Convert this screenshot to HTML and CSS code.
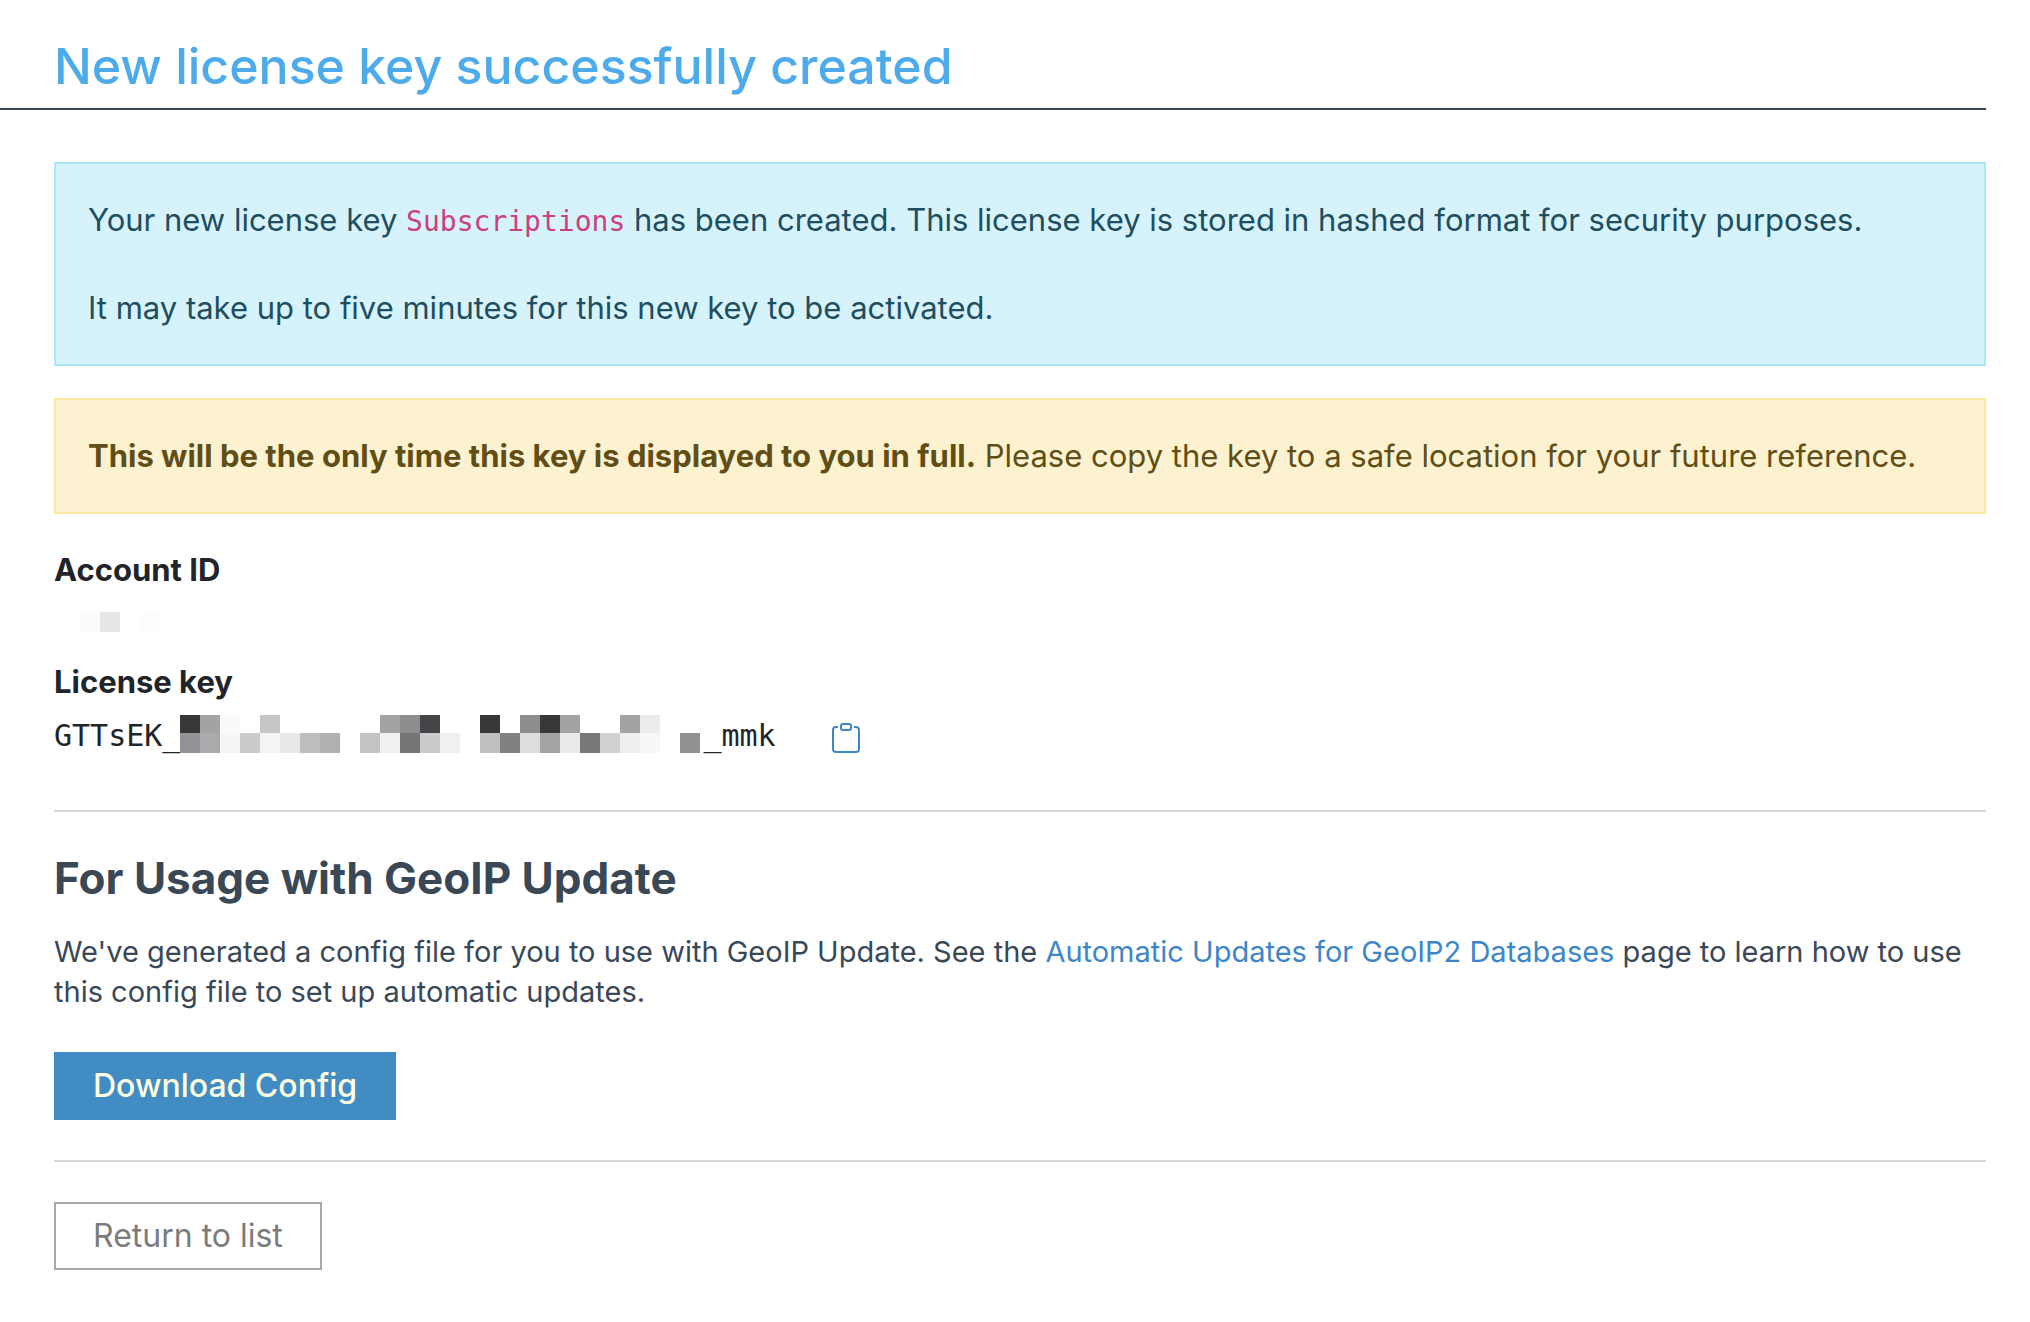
FILE: index.html
```
<!DOCTYPE html>
<html lang="en">
<head>
    <meta charset="UTF-8">
    <meta name="viewport" content="width=device-width, initial-scale=1.0">
    <title>New license key</title>
    <link rel="stylesheet" href="styles.css">
</head>
<body>

    <header class="page-header">
        <h1>New license key successfully created</h1>
    </header>

    <main class="content">
        <div class="alert alert-info">
            <p>Your new license key <code>Subscriptions</code> has been created. This license key is stored in hashed format for security purposes.</p>
            <p>It may take up to five minutes for this new key to be activated.</p>
        </div>

        <div class="alert alert-warning">
            <p><strong>This will be the only time this key is displayed to you in full.</strong> Please copy the key to a safe location for your future reference.</p>
        </div>

        <dl class="credentials">
            <dt>Account ID</dt>
            <dd>
                <!-- Hidden account number -->
                <svg class="mask" width="120" height="20" aria-hidden="true">
                    <rect x="26" width="20" height="20" fill="#fbfbfb"/>
                    <rect x="46" width="20" height="20" fill="#e6e8e7"/>
                    <rect x="86" width="20" height="20" fill="#fdfdfd"/>
                </svg>
            </dd>
            <dt>License key</dt>
            <dd class="license-key">
                <span>GTTsEK_</span>
                <!-- Hidden part of the key -->
                <svg class="mask" width="523" height="38" aria-hidden="true">
                    <g>
                        <rect x="0" width="20" height="18" fill="#373739"/>
                        <rect x="20" width="20" height="18" fill="#a2a4a3"/>
                        <rect x="40" width="20" height="18" fill="#fafafa"/>
                        <rect x="80" width="20" height="18" fill="#c6c6c6"/>
                        <rect x="200" width="20" height="18" fill="#a2a4a3"/>
                        <rect x="220" width="20" height="18" fill="#8c8d8f"/>
                        <rect x="240" width="20" height="18" fill="#434348"/>
                        <rect x="300" width="20" height="18" fill="#373739"/>
                        <rect x="340" width="20" height="18" fill="#8c8d8f"/>
                        <rect x="360" width="20" height="18" fill="#373739"/>
                        <rect x="380" width="20" height="18" fill="#a2a4a3"/>
                        <rect x="440" width="20" height="18" fill="#a2a4a3"/>
                        <rect x="460" width="20" height="18" fill="#ececec"/>
                    </g>
                    <g>
                        <rect x="0" y="18" width="20" height="20" fill="#929396"/>
                        <rect x="20" y="18" width="20" height="20" fill="#a9aaac"/>
                        <rect x="40" y="18" width="20" height="20" fill="#f5f5f5"/>
                        <rect x="60" y="18" width="20" height="20" fill="#cbcbcb"/>
                        <rect x="80" y="18" width="20" height="20" fill="#f4f4f4"/>
                        <rect x="100" y="18" width="20" height="20" fill="#e8e8e8"/>
                        <rect x="120" y="18" width="20" height="20" fill="#bdbdbd"/>
                        <rect x="140" y="18" width="20" height="20" fill="#b0b1b3"/>
                        <rect x="180" y="18" width="20" height="20" fill="#c3c3c3"/>
                        <rect x="200" y="18" width="20" height="20" fill="#f0f0f0"/>
                        <rect x="220" y="18" width="20" height="20" fill="#757677"/>
                        <rect x="240" y="18" width="20" height="20" fill="#cbcbcb"/>
                        <rect x="260" y="18" width="20" height="20" fill="#f0f0f0"/>
                        <rect x="300" y="18" width="20" height="20" fill="#c0c0c0"/>
                        <rect x="320" y="18" width="20" height="20" fill="#808183"/>
                        <rect x="340" y="18" width="20" height="20" fill="#dcdedd"/>
                        <rect x="360" y="18" width="20" height="20" fill="#a4a4a6"/>
                        <rect x="380" y="18" width="20" height="20" fill="#eaeaea"/>
                        <rect x="400" y="18" width="20" height="20" fill="#777879"/>
                        <rect x="420" y="18" width="20" height="20" fill="#d0d2d1"/>
                        <rect x="440" y="18" width="20" height="20" fill="#efefef"/>
                        <rect x="460" y="18" width="20" height="20" fill="#f7f7f7"/>
                        <rect x="500" y="18" width="20" height="20" fill="#909193"/>
                    </g>
                </svg>
                <span>_mmk</span>
                <button type="button" class="copy-button" aria-label="Copy license key">
                    <svg width="28" height="32" viewBox="0 0 28 32" fill="none" stroke="#3d86c8" stroke-width="2">
                        <path d="M6 5H4a3 3 0 0 0-3 3v19a3 3 0 0 0 3 3h20a3 3 0 0 0 3-3V8a3 3 0 0 0-3-3h-2"/>
                        <rect x="9" y="2" width="10" height="6" rx="2"/>
                    </svg>
                </button>
            </dd>
        </dl>

        <section class="usage">
            <h2>For Usage with GeoIP Update</h2>
            <p>We've generated a config file for you to use with GeoIP Update. See the <a href="#">Automatic Updates for GeoIP2 Databases</a> page to learn how to use this config file to set up automatic updates.</p>
            <button type="button" class="btn btn-primary">Download Config</button>
        </section>

        <footer class="page-footer">
            <button type="button" class="btn btn-outline">Return to list</button>
        </footer>
    </main>

</body>
</html>
```
FILE: styles.css
```
* {
    box-sizing: border-box;
}

body {
    margin: 0;
    background-color: #fff;
    color: #212529;
    font-family: Inter, "Liberation Sans", sans-serif;
    font-size: 31px;
    line-height: 48px;
}

h1, h2, p, dl, dd {
    margin: 0;
}

.page-header {
    margin-right: 44px;
    padding: 36px 0 12px 54px;
    border-bottom: 2px solid #3a4856;
}

h1 {
    color: #4dabec;
    font-size: 50px;
    font-weight: 500;
    line-height: 60px;
}

.content {
    padding: 52px 44px 52px 54px;
}

/* Messages */
.alert {
    margin-bottom: 32px;
    padding: 32px;
    border: 2px solid;
}

.alert p + p {
    margin-top: 40px;
}

.alert-info {
    background-color: #d6f3fb;
    border-color: #aee8f7;
    color: #1f4e5f;
}

.alert-warning {
    background-color: #fdf2d0;
    border-color: #fce7a0;
    color: #604e16;
}

code {
    color: #c9417f;
    font-family: "DejaVu Sans Mono", monospace;
    font-size: 28px;
    line-height: 32px;
}

/* Account ID and key */
.credentials {
    padding-bottom: 48px;
}

.credentials dt {
    font-weight: 700;
}

.credentials dd {
    display: flex;
    align-items: center;
    height: 56px;
    margin-bottom: 8px;
}

.credentials .license-key {
    margin-bottom: 0;
    padding-top: 4px;
    font-family: "DejaVu Sans Mono", monospace;
    font-size: 30px;
}

.mask {
    display: block;
    flex: none;
}

.license-key .mask {
    margin-bottom: 4px;
}

.copy-button {
    display: flex;
    margin: 4px 0 0 56px;
    padding: 0;
    border: 0;
    background: none;
    cursor: pointer;
}

/* Config file */
.usage {
    padding: 40px 0;
    border-top: 2px solid #d6d8db;
    color: #3a4856;
}

h2 {
    margin-bottom: 28px;
    font-size: 44px;
    font-weight: 700;
    line-height: 52px;
}

.usage p {
    margin-bottom: 40px;
    font-size: 29px;
    line-height: 40px;
}

.usage a {
    color: #3d86c8;
    text-decoration: none;
}

.btn {
    display: block;
    height: 68px;
    padding: 0 37px;
    border: 2px solid;
    font-family: inherit;
    font-size: 32px;
    line-height: 40px;
    cursor: pointer;
}

.btn-primary {
    background-color: #418dc3;
    border-color: #418dc3;
    color: #fffde0;
    font-weight: 500;
}

.btn-outline {
    background-color: #fff;
    border-color: #a7a8aa;
    color: #7c7c7c;
}

.page-footer {
    padding-top: 40px;
    border-top: 2px solid #d6d8db;
}
```
